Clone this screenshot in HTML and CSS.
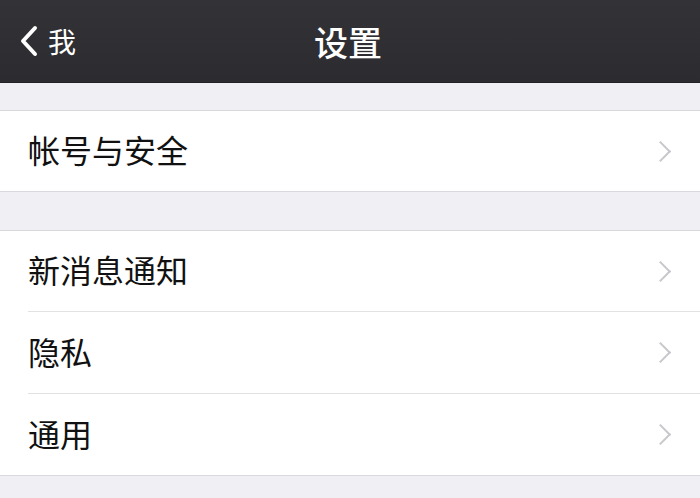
FILE: index.html
```html
<!DOCTYPE html>
<html lang="zh-CN">
<head>
  <meta charset="UTF-8" />
  <title>设置</title>
  <link rel="stylesheet" href="styles.css">
</head>
<body>
  <header class="navbar">
    <a class="back" href="#">
      <svg class="back-icon" width="20" height="32" viewBox="0 0 20 32">
        <path d="M16 3 L4 16 L16 29" fill="none" stroke="#fff" stroke-width="4" stroke-linecap="round" stroke-linejoin="round"/>
      </svg>
      <span>我</span>
    </a>
    <h1 class="title">设置</h1>
  </header>

  <div class="group">
    <div class="row"><span>帐号与安全</span><i class="chevron"></i></div>
  </div>

  <div class="group">
    <div class="row"><span>新消息通知</span><i class="chevron"></i></div>
    <div class="row"><span>隐私</span><i class="chevron"></i></div>
    <div class="row"><span>通用</span><i class="chevron"></i></div>
  </div>
</body>
</html>
```

FILE: styles.css
```css
body {
  margin: 0;
  background: #efeff4;
  font-family: "Noto Sans CJK SC", "Noto Sans", sans-serif;
  overflow: hidden;
}

.navbar {
  height: 83px;
  background: linear-gradient(#333337, #2c2c30);
  display: flex;
  align-items: center;
  justify-content: center;
  position: relative;
  border-bottom: 1px solid #232326;
  box-sizing: border-box;
}

.back {
  position: absolute;
  left: 19px;
  top: 25px;
  display: flex;
  align-items: center;
  gap: 9px;
  color: #fff;
  text-decoration: none;
  font-size: 28px;
  line-height: 32px;
}

.title {
  margin: 0;
  color: #fff;
  font-size: 34px;
  font-weight: 500;
  letter-spacing: 0;
  padding-right: 4px;
}

.group {
  background: #fff;
  border-top: 1px solid #d9d9dd;
  border-bottom: 1px solid #d9d9dd;
  margin-top: 27px;
  padding-left: 28px;
}

.group + .group {
  margin-top: 38px;
}

.row {
  height: 80px;
  display: flex;
  align-items: center;
  justify-content: space-between;
  padding-right: 32px;
  font-size: 32px;
  color: #111;
}

.row span {
  margin-top: -4px;
}

.row + .row {
  border-top: 1px solid #e2e2e5;
  height: 81px;
}

.chevron {
  width: 13px;
  height: 13px;
  border-top: 2.5px solid #c7c7cc;
  border-right: 2.5px solid #c7c7cc;
  transform: rotate(45deg);
  margin-top: 0;
}
```
